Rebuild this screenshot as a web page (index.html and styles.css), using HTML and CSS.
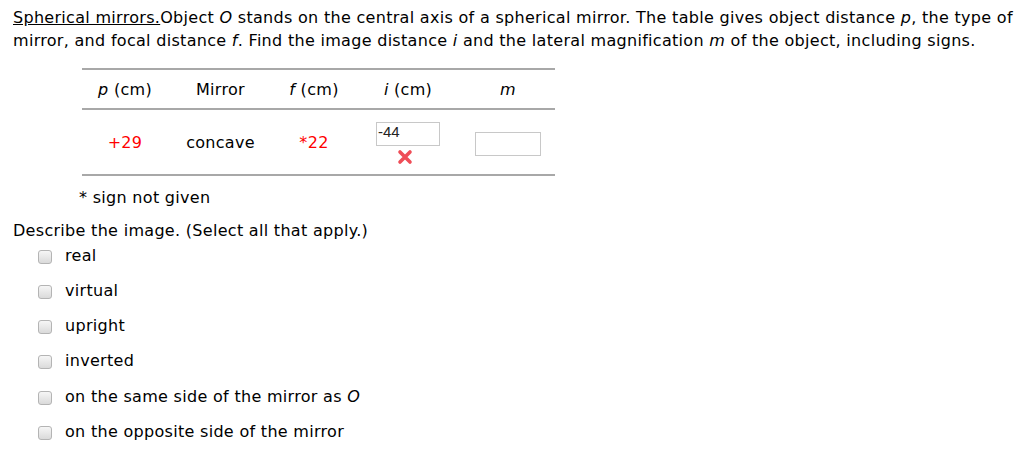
FILE: index.html
```html
<!DOCTYPE html>
<html>
<head>
<meta charset="utf-8">
<link rel="stylesheet" href="styles.css">
</head>
<body>
<div class="page">
  <p class="intro"><span class="title">Spherical mirrors.</span>Object <i>O</i> stands on the central axis of a spherical mirror. The table gives object distance <i>p</i>, the type of<br>mirror, and focal distance <i>f</i>. Find the image distance <i>i</i> and the lateral magnification <i>m</i> of the object, including signs.</p>

  <table class="data">
    <thead>
      <tr>
        <th class="c1"><i>p</i> (cm)</th>
        <th class="c2">Mirror</th>
        <th class="c3"><i>f</i> (cm)</th>
        <th class="c4"><i>i</i> (cm)</th>
        <th class="c5"><i>m</i></th>
      </tr>
    </thead>
    <tbody>
      <tr>
        <td class="red">+29</td>
        <td>concave</td>
        <td class="red">*22</td>
        <td class="answer">
          <div class="field">-44</div>
          <svg class="cross" width="16" height="16" viewBox="0 0 16 16"><path d="M3 3 L13 13 M13 3 L3 13" stroke="#ef4d57" stroke-width="3.6" stroke-linecap="round"/></svg>
        </td>
        <td><div class="field empty"></div></td>
      </tr>
    </tbody>
  </table>

  <p class="note">* sign not given</p>

  <p class="question">Describe the image. (Select all that apply.)</p>
  <ul class="options">
    <li><span class="box"></span><span>real</span></li>
    <li><span class="box"></span><span>virtual</span></li>
    <li><span class="box"></span><span>upright</span></li>
    <li><span class="box"></span><span>inverted</span></li>
    <li><span class="box"></span><span>on the same side of the mirror as <i>O</i></span></li>
    <li><span class="box"></span><span>on the opposite side of the mirror</span></li>
  </ul>
</div>
</body>
</html>
```

FILE: styles.css
```css
html, body {
  margin: 0;
  padding: 0;
  background: #fff;
}
body {
  font-family: "DejaVu Sans", Verdana, sans-serif;
  font-size: 16px;
  letter-spacing: 0.3px;
  color: #000;
}
.page {
  padding: 6px 0 0 13px;
}
.intro {
  margin: 0;
  line-height: 23px;
  white-space: nowrap;
}
.title {
  text-decoration: underline;
}
.data {
  margin: 16px 0 0 69px;
  width: 473px;
  border-collapse: collapse;
  border-top: 2px solid #a8a8a8;
  border-bottom: 2px solid #a8a8a8;
  table-layout: fixed;
}
.data th {
  font-weight: normal;
  height: 38px;
  border-bottom: 2px solid #a8a8a8;
  padding: 0;
  text-align: center;
}
.data td {
  text-align: center;
  vertical-align: middle;
  height: 64px;
  padding: 0;
}
.c1 { width: 86px; }
.c2 { width: 105px; }
.c3 { width: 82px; }
.c4 { width: 106px; }
.c5 { width: 94px; }
.red { color: #ff0000; }
.field {
  width: 64px;
  height: 24px;
  border: 1px solid #c8c8c8;
  box-sizing: border-box;
  margin: 0 auto;
  text-align: left;
  font-size: 15px;
  letter-spacing: 0;
  line-height: 18px;
  padding-left: 1px;
  font-family: "Liberation Sans", Arial, sans-serif;
  color: #222;
}
.answer .field {
  margin-top: 2px;
}
.field.empty {
  width: 66px;
  height: 24px;
  margin-top: 3px;
}
.cross {
  display: block;
  margin: 3px auto 0 42px;
}
.note {
  margin: 12px 0 0 66px;
  line-height: 20px;
}
.question {
  margin: 13px 0 0 0;
  line-height: 20px;
}
.options {
  list-style: none;
  margin: 4px 0 0 0;
  padding: 0;
}
.options li {
  display: flex;
  align-items: center;
  height: 20px;
  margin-bottom: 15.3px;
}
.box {
  flex: none;
  width: 14px;
  height: 14px;
  margin: 3px 13px 0 25px;
  box-sizing: border-box;
  border: 1px solid #b4b4b4;
  border-radius: 3px;
  background: linear-gradient(#f6f6f6, #dadada);
}
```
